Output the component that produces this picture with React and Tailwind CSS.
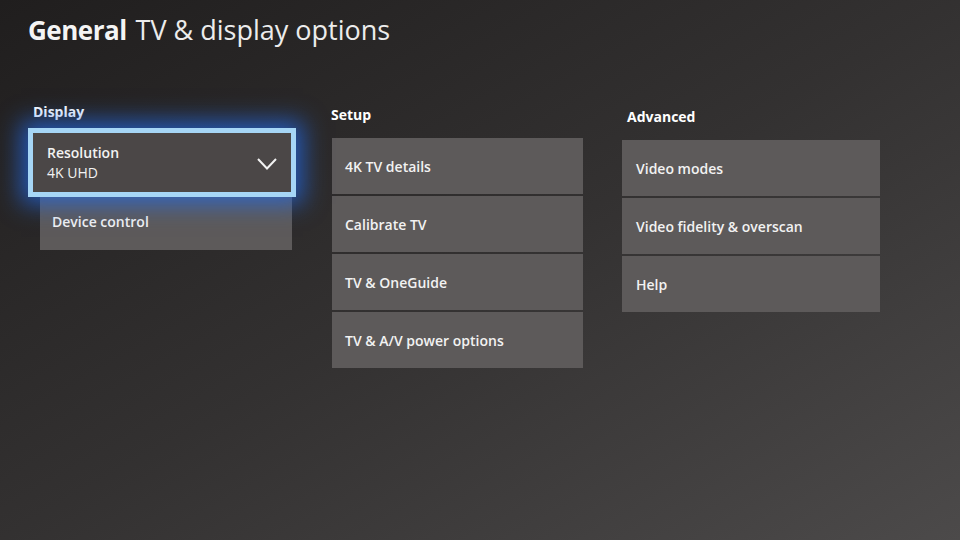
import React from "react";

const setup = ["4K TV details", "Calibrate TV", "TV & OneGuide", "TV & A/V power options"];
const advanced = ["Video modes", "Video fidelity & overscan", "Help"];

function Tile({ label, h = "h-[56px]", pad = "px-[13px]", className = "" }) {
  return (
    <div className={`${h} ${pad} bg-[#5d5a5a] flex items-center text-[14px] font-semibold text-[#f2f2f2] ${className}`}>
      {label}
    </div>
  );
}

export default function App() {
  return (
    <div
      className="w-[960px] h-[540px] overflow-hidden bg-gradient-to-br from-[#201e1e] via-[#333131] to-[#4c4a4a] text-white"
      style={{ fontFamily: '"Open Sans", "Noto Sans", sans-serif' }}
    >
      {/* Title */}
      <div className="pl-[28px] pt-[16px] flex items-baseline gap-[9px] leading-none h-[50px]">
        <span className="text-[26px] font-bold tracking-[-0.5px] text-[#f4f4f4]">General</span>
        <span className="text-[27px] font-normal text-[#ececec]">TV &amp; display options</span>
      </div>

      <div className="flex mt-[52px]">
        {/* Display */}
        <div className="ml-[28px] w-[268px]">
          <p className="pl-[5px] text-[14px] font-bold leading-[20px] h-[20px] mb-[6px]">Display</p>
          <div className="h-[69px] border-[5px] border-[#a6d6f6] bg-[#4b4747] shadow-[0_0_22px_7px_rgba(35,105,230,0.75)] flex items-center px-[14px] relative z-10">
            <div className="flex-1 leading-[20px]">
              <p className="text-[14px] font-semibold text-[#f2f2f2]">Resolution</p>
              <p className="text-[14px] font-normal text-[#f2f2f2]">4K UHD</p>
            </div>
            <svg width="20" height="12" viewBox="0 0 20 12" className="mt-[2px]">
              <polyline points="1,1 10,10.5 19,1" fill="none" stroke="#f2f2f2" strokeWidth="2" />
            </svg>
          </div>
          <Tile label="Device control" h="h-[53px]" pad="px-[12px]" className="ml-[12px] w-[252px] pb-[4px]" />
        </div>

        {/* Setup */}
        <div className="ml-[36px] w-[251px] mt-[3px]">
          <p className="text-[14px] font-bold leading-[20px] h-[20px] mb-[13px] -ml-[1px]">Setup</p>
          <div className="flex flex-col gap-[2px]">
            {setup.map((s) => (
              <Tile key={s} label={s} />
            ))}
          </div>
        </div>

        {/* Advanced */}
        <div className="ml-[39px] w-[258px] mt-[5px]">
          <p className="pl-[5px] text-[14px] font-bold leading-[20px] h-[20px] mb-[13px]">Advanced</p>
          <div className="flex flex-col gap-[2px]">
            {advanced.map((s) => (
              <Tile key={s} label={s} h="h-[56px]" pad="px-[14px]" />
            ))}
          </div>
        </div>
      </div>
    </div>
  );
}
